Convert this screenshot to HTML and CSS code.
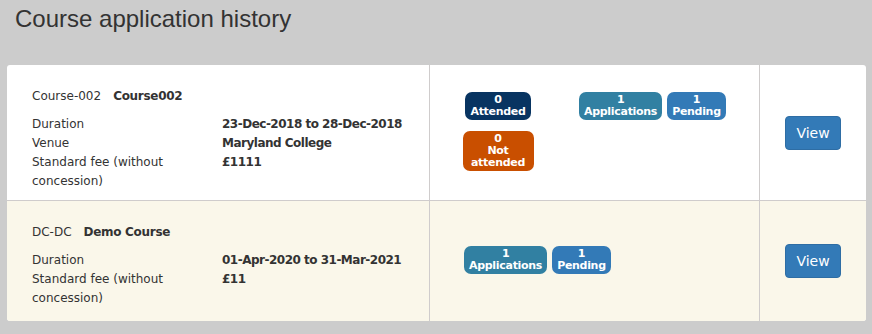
FILE: index.html
```html
<!DOCTYPE html>
<html>
<head>
<meta charset="utf-8">
<link rel="stylesheet" href="styles.css">
</head>
<body>
<div class="page">
  <h1 class="title">Course application history</h1>
  <div class="card">
    <div class="row">
      <div class="cell info">
        <div class="head"><span class="code">Course-002</span><span class="name">Course002</span></div>
        <div class="details">
          <div class="label">Duration</div><div class="value">23-Dec-2018 to 28-Dec-2018</div>
          <div class="label">Venue</div><div class="value">Maryland College</div>
          <div class="label">Standard fee (without concession)</div><div class="value">£1111</div>
        </div>
      </div>
      <div class="cell badges">
        <div class="attend-group">
          <span class="badge attended">0<br>Attended</span>
          <span class="badge not-attended">0<br>Not attended</span>
        </div>
        <div class="app-group">
          <span class="badge applications">1<br>Applications</span>
          <span class="badge pending">1<br>Pending</span>
        </div>
      </div>
      <div class="cell action"><button class="btn">View</button></div>
    </div>
    <div class="row alt">
      <div class="cell info">
        <div class="head"><span class="code">DC-DC</span><span class="name">Demo Course</span></div>
        <div class="details">
          <div class="label">Duration</div><div class="value">01-Apr-2020 to 31-Mar-2021</div>
          <div class="label">Standard fee (without concession)</div><div class="value">£11</div>
        </div>
      </div>
      <div class="cell badges center">
        <div class="app-group">
          <span class="badge applications">1<br>Applications</span>
          <span class="badge pending">1<br>Pending</span>
        </div>
      </div>
      <div class="cell action"><button class="btn">View</button></div>
    </div>
  </div>
</div>
</body>
</html>
```

FILE: styles.css
```css
html, body {
  margin: 0;
  padding: 0;
  background: #cccccc;
}
.page {
  width: 872px;
  height: 334px;
  box-sizing: border-box;
  padding: 0 6px 0 7px;
  font-family: "DejaVu Sans", Verdana, sans-serif;
  font-size: 12px;
  color: #333;
}
.title {
  margin: 0;
  padding: 6px 0 0 8px;
  height: 65px;
  box-sizing: border-box;
  font-family: "Liberation Sans", Arial, sans-serif;
  font-weight: normal;
  font-size: 24px;
  line-height: 26px;
  color: #333;
}
.card {
  background: #fff;
  border-radius: 3px;
  overflow: hidden;
}
.row {
  display: grid;
  grid-template-columns: 423px 330px 1fr;
  border-bottom: 1px solid #cfcccc;
  min-height: 120px;
}
.row:last-child { border-bottom: none; }
.row.alt { background: #faf7ea; }
.cell {
  border-right: 1px solid #cfcccc;
}
.cell:last-child { border-right: none; }
.info {
  padding: 22px 10px 9px 25px;
  line-height: 19px;
}
.head {
  margin-bottom: 9px;
}
.code { margin-right: 12px; }
.name { font-weight: bold; letter-spacing: -0.3px; }
.details {
  display: grid;
  grid-template-columns: 190px 1fr;
}
.label { padding-right: 20px; }
.value { font-weight: bold; letter-spacing: -0.5px; }
.badges {
  display: flex;
  align-items: flex-start;
  padding: 27px 0 0 32px;
  gap: 45px;
}
.badges.center {
  align-items: center;
  padding: 0 0 3px 34px;
}
.attend-group {
  width: 72px;
  display: flex;
  flex-direction: column;
  align-items: center;
  gap: 11px;
}
.app-group {
  display: flex;
  gap: 5px;
}
.badge {
  display: inline-block;
  box-sizing: border-box;
  padding: 2px 5px;
  border-radius: 7px;
  color: #fff;
  font-weight: bold;
  font-size: 11px;
  line-height: 12px;
  letter-spacing: -0.3px;
  text-align: center;
}
.attended { background: #083461; }
.not-attended { background: #c94f00; width: 71px; padding: 2px 4px; }
.applications { background: #3180a2; }
.pending { background: #337ab7; }
.action {
  display: flex;
  align-items: center;
  justify-content: center;
}
.btn {
  background: #337ab7;
  border: 1px solid #2e6da4;
  border-radius: 4px;
  color: #fff;
  font-family: "DejaVu Sans", Verdana, sans-serif;
  font-size: 14px;
  width: 56px;
  height: 34px;
  padding: 0;
}
```
